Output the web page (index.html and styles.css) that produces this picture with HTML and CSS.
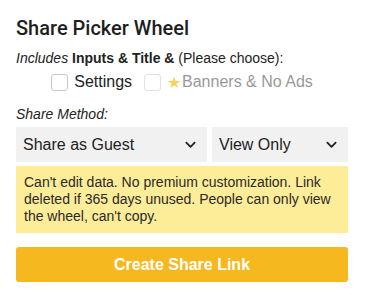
FILE: index.html
```html
<!DOCTYPE html>
<html>
<head>
<meta charset="utf-8">
<link rel="stylesheet" href="styles.css">
</head>
<body>
<div class="panel">
  <h1 class="title">Share Picker Wheel</h1>
  <p class="includes"><em>Includes</em> <strong>Inputs &amp; Title &amp;</strong> (Please choose):</p>
  <div class="options">
    <label class="opt"><span class="box"></span><span>Settings</span></label>
    <label class="opt disabled"><span class="box"></span><span class="star">★</span><span>Banners &amp; No Ads</span></label>
  </div>
  <p class="method">Share Method:</p>
  <div class="selects">
    <div class="select"><span>Share as Guest</span><svg class="chev" viewBox="0 0 12 8" width="11" height="8"><path d="M1.5 1.5 L6 6 L10.5 1.5" fill="none" stroke="#222" stroke-width="2" stroke-linecap="round" stroke-linejoin="round"/></svg></div>
    <div class="select"><span>View Only</span><svg class="chev" viewBox="0 0 12 8" width="11" height="8"><path d="M1.5 1.5 L6 6 L10.5 1.5" fill="none" stroke="#222" stroke-width="2" stroke-linecap="round" stroke-linejoin="round"/></svg></div>
  </div>
  <div class="note">Can't edit data. No premium customization. Link deleted if 365 days unused. People can only view the wheel, can't copy.</div>
  <button class="create">Create Share Link</button>
</div>
</body>
</html>
```
FILE: styles.css
```css
html, body {
  margin: 0;
  padding: 0;
  background: #fff;
}
body {
  font-family: "Liberation Sans", Arial, sans-serif;
  color: #222;
}
.panel {
  padding: 16px 17px 0 16px;
  display: flex;
  flex-direction: column;
}
.title {
  margin: 0;
  font-family: Roboto, "Liberation Sans", Arial, sans-serif;
  font-size: 20px;
  line-height: 24px;
  font-weight: 500;
  color: #1e1e1e;
}
.includes {
  margin: 8px 0 0;
  font-size: 14px;
  line-height: 20px;
}
.includes strong { font-weight: 700; }
.options {
  display: flex;
  justify-content: center;
  gap: 12px;
  margin-top: 4px;
  height: 20px;
  align-items: center;
  font-size: 16px;
}
.opt {
  display: flex;
  align-items: center;
  gap: 6px;
}
.box {
  width: 15px;
  height: 15px;
  border: 1px solid #c8c8c8;
  border-radius: 3px;
  background: #fff;
}
.opt.disabled { color: #999; gap: 6px; }
.opt.disabled .box { border-color: #e0e0e0; }
.star {
  color: #f5d35a;
  margin-right: -5px;
}
.method {
  margin: 12px 0 0;
  font-size: 14px;
  line-height: 20px;
  font-style: italic;
  color: #222;
}
.selects {
  display: grid;
  grid-template-columns: 191px 1fr;
  gap: 5px;
  margin-top: 3px;
}
.select {
  height: 35px;
  background: #f1f1f1;
  display: flex;
  align-items: center;
  justify-content: space-between;
  padding: 0 11px 0 7px;
  font-size: 16px;
}
.note {
  margin-top: 4px;
  background: #fdec98;
  padding: 8px 5px 8px 8px;
  font-size: 14px;
  line-height: 17px;
  color: #2a2a2a;
}
.create {
  margin-top: 14px;
  height: 35px;
  border: 0;
  border-radius: 3px;
  background: #f6b81f;
  color: #fff;
  font-family: "Liberation Sans", Arial, sans-serif;
  font-weight: 700;
  font-size: 16px;
}
```
